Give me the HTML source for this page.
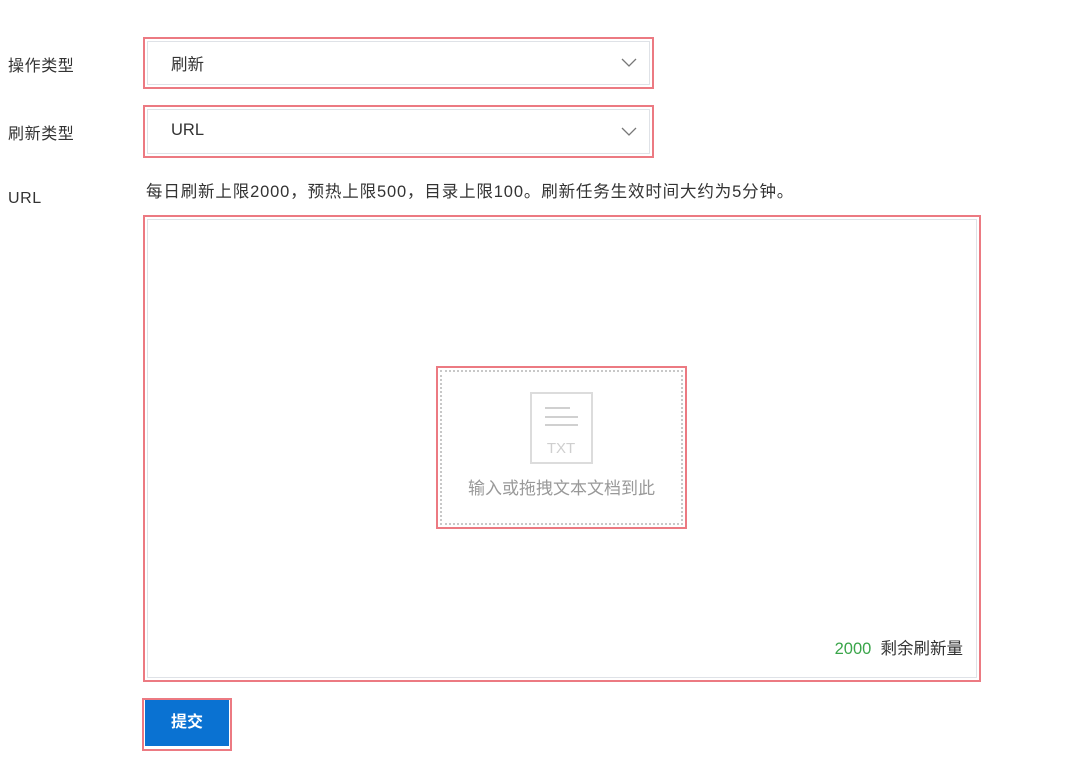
<!DOCTYPE html>
<html><head><meta charset="utf-8"><style>
body{margin:0;width:1080px;height:773px;background:#fff;font-family:"Liberation Sans","Noto Sans CJK SC",sans-serif;color:#333;position:relative;overflow:hidden}
.a{position:absolute}
.lbl{font-size:16px;left:8px;letter-spacing:0.6px}
.red{border:2px solid #ec7a82;box-sizing:border-box}
.inner{position:absolute;left:2px;top:2px;right:2px;bottom:2px;border:1px solid #dfe2e7;box-sizing:border-box}
.sel{font-size:16.5px}
</style></head><body>
<div class="a lbl" style="top:52px">操作类型</div>
<div class="a lbl" style="top:120px">刷新类型</div>
<div class="a lbl" style="top:190px">URL</div>

<div class="a red" style="left:143px;top:37px;width:511px;height:52px"><div class="inner"></div>
<div class="a sel" style="left:26px;top:12px">刷新</div>
<svg class="a" style="left:476px;top:19px" width="16" height="10"><path d="M1 1L8 8L15 1" fill="none" stroke="#777" stroke-width="1.3"/></svg></div>

<div class="a red" style="left:143px;top:105px;width:511px;height:53px"><div class="inner"></div>
<div class="a sel" style="left:26px;top:14px">URL</div>
<svg class="a" style="left:476px;top:20px" width="16" height="10"><path d="M1 1L8 8L15 1" fill="none" stroke="#777" stroke-width="1.3"/></svg></div>

<div class="a" style="left:146px;top:178px;font-size:16.5px;color:#333;white-space:nowrap;letter-spacing:0.85px">每日刷新上限2000，预热上限500，目录上限100。刷新任务生效时间大约为5分钟。</div>

<div class="a red" style="left:143px;top:215px;width:838px;height:467px"><div class="inner"></div>
<div class="a" style="right:16px;bottom:21px;font-size:16.5px"><span style="color:#3aa54a">2000</span>&nbsp; 剩余刷新量</div></div>

<div class="a red" style="left:436px;top:366px;width:251px;height:163px">
<div class="a" style="left:2px;top:2px;right:2px;bottom:2px;border:2px dotted #c8c8c8"></div>
<svg class="a" style="left:92px;top:24px" width="64" height="74">
<rect x="1" y="1" width="61" height="70" fill="none" stroke="#dcdcdc" stroke-width="2"/>
<path d="M15 16H40M15 25H48M15 33H48" stroke="#d0d0d0" stroke-width="2"/>
<text x="31" y="61" font-size="15" fill="#cfcfcf" text-anchor="middle" font-family="Liberation Sans">TXT</text></svg>
<div class="a" style="left:0;right:0;top:106px;text-align:center;font-size:17px;color:#999">输入或拖拽文本文档到此</div></div>

<div class="a red" style="left:142px;top:698px;width:90px;height:53px"></div>
<div class="a" style="left:145px;top:700px;width:84px;height:46px;background:#0a72d2;color:#fff;font-size:16px;font-weight:bold;text-align:center;line-height:46px">提交</div>
</body></html>
